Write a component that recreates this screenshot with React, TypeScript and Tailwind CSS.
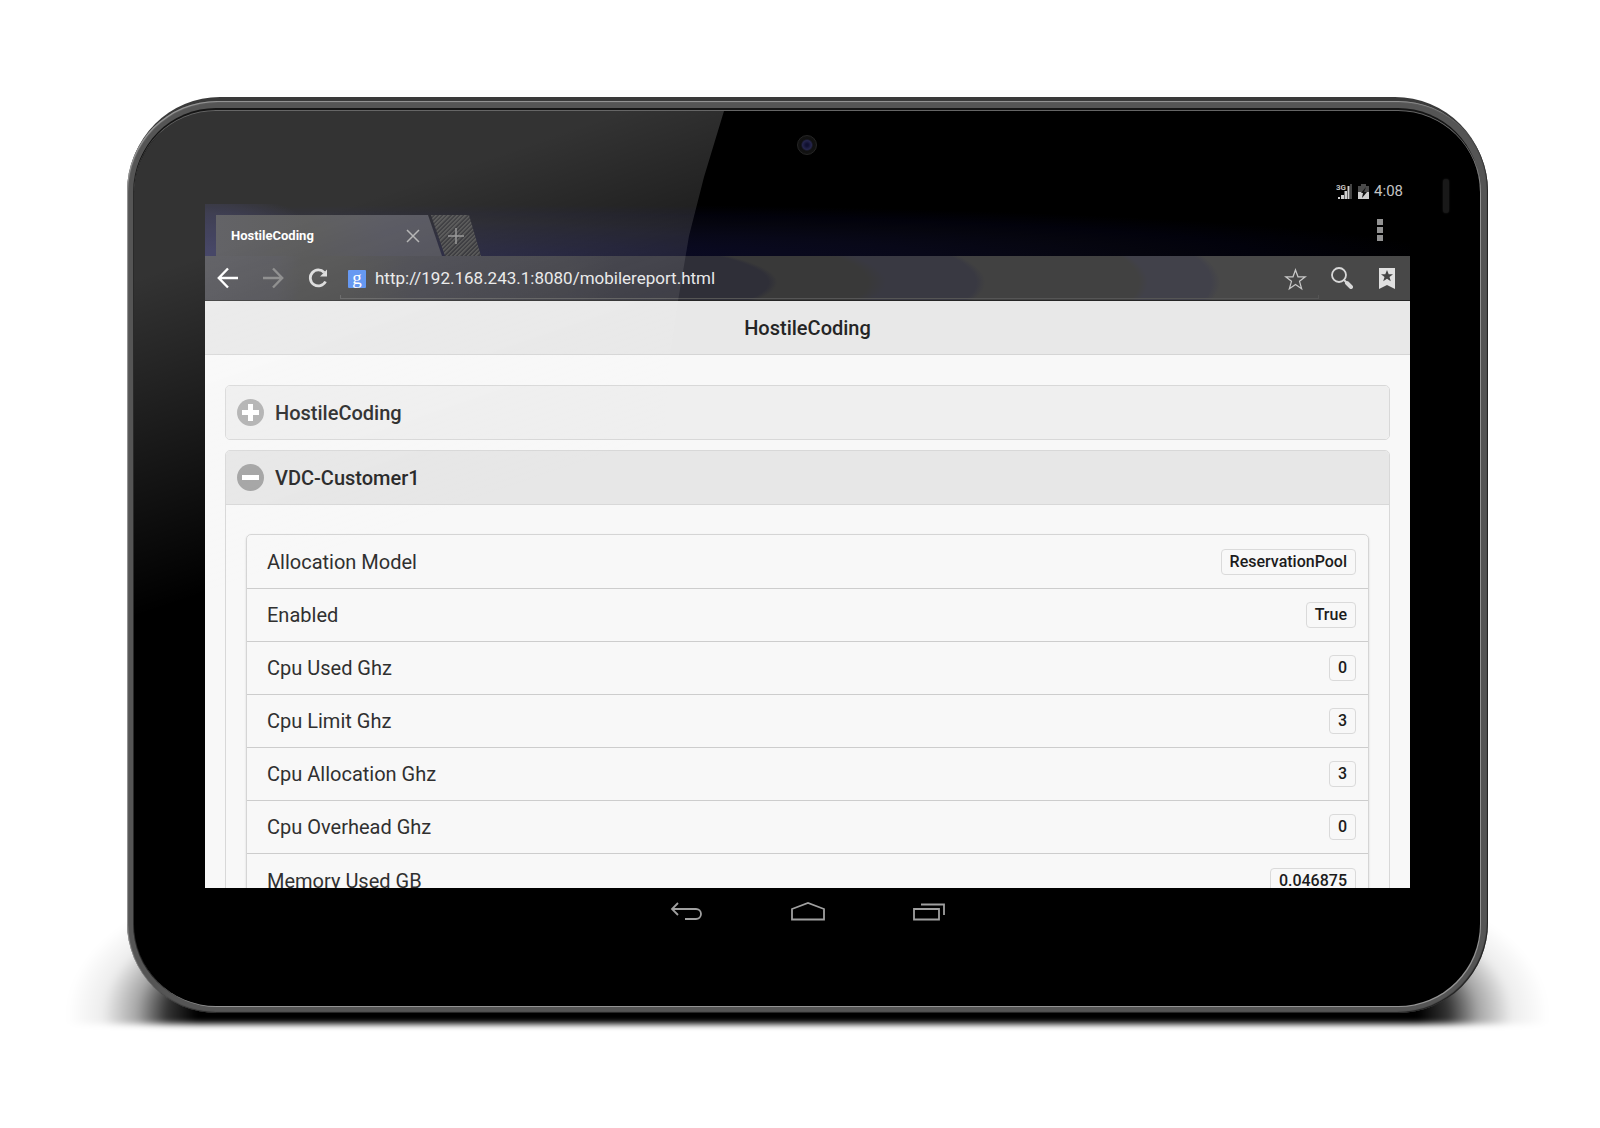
import React, { useState } from 'react';

const vdcDetails = [
    { label: 'Allocation Model', value: 'ReservationPool' },
    { label: 'Enabled', value: 'True' },
    { label: 'Cpu Used Ghz', value: '0' },
    { label: 'Cpu Limit Ghz', value: '3' },
    { label: 'Cpu Allocation Ghz', value: '3' },
    { label: 'Cpu Overhead Ghz', value: '0' },
    { label: 'Memory Used GB', value: '0.046875' },
];

const StatusBar: React.FC = () => (
    <div className="flex h-[26px] shrink-0 items-center justify-end gap-[5px] pr-[7px] text-[#c4c4c4]">
        <svg width="17" height="17" viewBox="0 0 17 17" aria-hidden="true">
            <text x="0" y="7" fill="#c4c4c4" fontSize="8" fontWeight="700" fontFamily="Roboto, sans-serif">3G</text>
            <path d="M2 16v-2h2v2zM5 16v-4h3v4zM8.500 16V8h2.500v8zM11.500 16V3h2v13z" fill="#d0d0d0" />
            <path d="M14 16V1h2v15z" fill="#444" />
        </svg>
        <svg width="11" height="17" viewBox="0 0 11 17" aria-hidden="true">
            <path d="M3 1h5v2h3v13H0V3h3z" fill="#4a4a4a" />
            <path d="M0 9h11v7H0z" fill="#cfcfcf" />
            <path d="M8 4 3 10h2l-1 5 5-6H6z" fill="#111" />
        </svg>
        <span className="text-[15px] leading-5">4:08</span>
    </div>
);

const TabStrip: React.FC = () => (
    <div className="flex h-[52px] shrink-0 items-end justify-between bg-black bg-[radial-gradient(ellipse_10%_130%_at_0%_100%,#1b1b46,#10102a_60%,transparent),radial-gradient(ellipse_78%_100%_at_25%_100%,#0b0b28,#080818_45%,#05050e_68%,#02020c_80%,#000)] pl-[11px]">
        <div className="flex items-end">
            <div className="flex h-[41px] w-[226px] items-center justify-between bg-[linear-gradient(90deg,#3c3c41,#393939_40%,#393943_75%)] pr-[22px] pl-[15px] [clip-path:polygon(0_0,calc(100%-14px)_0,100%_100%,0_100%)]">
                <span className="text-[13px] font-bold text-white">HostileCoding</span>
                <button type="button" aria-label="Close tab">
                    <svg width="14" height="14" viewBox="0 0 14 14" stroke="#a8a8a8" strokeWidth="1.500" aria-hidden="true">
                        <path d="m1 1 12 12M13 1 1 13" />
                    </svg>
                </button>
            </div>
            <button
                type="button"
                aria-label="New tab"
                className="-ml-[11px] flex h-[41px] w-[50px] items-center justify-center bg-[repeating-linear-gradient(135deg,#3c3c3c_0px,#3c3c3c_1px,#1c1c20_2px,#1c1c20_3px)] [clip-path:polygon(0_0,38px_0,100%_100%,14px_100%)]"
            >
                <svg width="16" height="16" viewBox="0 0 16 16" stroke="#868686" strokeWidth="1.500" aria-hidden="true">
                    <path d="M8 0v16M0 8h16" />
                </svg>
            </button>
        </div>
        <button type="button" aria-label="Browser menu" className="mr-[27px] mb-[15px] flex flex-col gap-[2px]">
            <span className="size-[6px] bg-[#929292]" />
            <span className="size-[6px] bg-[#929292]" />
            <span className="size-[6px] bg-[#929292]" />
        </button>
    </div>
);

const Toolbar: React.FC = () => (
    <form
        onSubmit={(e) => e.preventDefault()}
        className="flex h-[45px] shrink-0 items-center border-b border-[#252525] bg-[#484848] bg-[linear-gradient(90deg,#3e3e44,#3c3c41_6%,#393939_8%,#393939_12%,#34343c_18%,#33333a_30%,transparent_34%),radial-gradient(ellipse_75%_350%_at_25%_60%,#2f2f38_29%,#393939_30%,#393939_40%,#393942_42%,#393942_52%,#414141_53%,#414141_70%,#41414a_71%,#41414a_78%,#484848_79%)] pr-[15px] pl-3"
    >
        <button type="button" aria-label="Back">
            <svg width="22" height="22" viewBox="0 0 22 22" fill="none" stroke="#fff" strokeWidth="2.400" aria-hidden="true">
                <path d="M21 11H2M11 1.500 1.800 11l9.200 9.500" />
            </svg>
        </button>
        <button type="button" aria-label="Forward" className="ml-[23px]">
            <svg width="22" height="22" viewBox="0 0 22 22" fill="none" stroke="#7a7a7a" strokeWidth="2.400" aria-hidden="true">
                <path d="M1 11h19M11 1.500l9.200 9.500-9.200 9.500" />
            </svg>
        </button>
        <button type="button" aria-label="Reload" className="ml-6">
            <svg width="20" height="20" viewBox="0 0 20 20" fill="none" aria-hidden="true">
                <path d="M16.200 4.500A8 8 0 1 0 17.500 13.500" stroke="#d8d8d8" strokeWidth="2.800" />
                <path d="M19 1.500V8.500h-7z" fill="#d8d8d8" />
            </svg>
        </button>
        <div className="mt-[6px] ml-[12px] flex h-[36px] min-w-0 flex-1 items-center bg-[linear-gradient(#555,#555),linear-gradient(#555,#555),linear-gradient(#555,#555)] bg-[length:100%_1px,1px_4px,1px_4px] bg-[position:bottom,left_bottom,right_bottom] bg-no-repeat pr-3 pb-1 pl-2">
            <span className="flex size-[18px] shrink-0 items-center justify-center rounded-[1px] bg-[#4a86f0] pb-1 font-['Liberation_Serif',serif] text-[19px] leading-none text-white">
                g
            </span>
            <input
                type="text"
                aria-label="Address"
                defaultValue="http://192.168.243.1:8080/mobilereport.html"
                className="ml-[9px] min-w-0 flex-1 bg-transparent text-[17px] text-[#e8e8e8] outline-none"
            />
            <button type="button" aria-label="Add bookmark">
                <svg width="23" height="23" viewBox="0 0 24 24" fill="none" stroke="#c8c8c8" strokeWidth="1.300" aria-hidden="true">
                    <path d="m12 2 2.600 7.200h7.600l-6 4.700 2.200 7.800L12 17.200l-6.400 4.500 2.200-7.800-6-4.700h7.600z" />
                </svg>
            </button>
        </div>
        <button type="button" aria-label="Search" className="ml-[12px]">
            <svg width="22" height="22" viewBox="0 0 22 22" fill="none" stroke="#d8d8d8" strokeLinecap="round" aria-hidden="true">
                <circle cx="8" cy="8" r="7" strokeWidth="1.800" />
                <path d="m13 13 2.500 2.500" strokeWidth="2" />
                <path d="m16 16 4 4" strokeWidth="4" />
            </svg>
        </button>
        <button type="button" aria-label="Bookmarks" className="ml-[26px]">
            <svg width="16" height="21" viewBox="0 0 16 21" aria-hidden="true">
                <path d="M0 0h16v21l-8-4-8 4z" fill="#e0e0e0" />
                <path d="m8 2 1.700 4.200h4.300l-3.500 2.700 1.300 4.300L8 10.700l-3.800 2.500 1.300-4.300L2 6.200h4.300z" fill="#444" />
            </svg>
        </button>
    </form>
);

interface ToggleIconProps {
    open: boolean;
}

const ToggleIcon: React.FC<ToggleIconProps> = ({ open }) => (
    <svg width="27" height="27" viewBox="0 0 27 27" aria-hidden="true">
        <circle cx="13.500" cy="13.500" r="13.500" fill={open ? '#a2a2a2' : '#afafaf'} />
        <path d={open ? 'M5 11h17v5H5z' : 'M5 11h6V5h5v6h6v5h-6v6h-5v-6H5z'} fill="#fff" />
    </svg>
);

interface CollapsibleProps {
    title: string;
    defaultOpen?: boolean;
    children?: React.ReactNode;
}

const Collapsible: React.FC<CollapsibleProps> = ({ title, defaultOpen = false, children }) => {
    const [open, setOpen] = useState(defaultOpen);

    return (
        <section className="overflow-hidden rounded-[5px] border border-[#d8d8d8]">
            <h2>
                <button
                    type="button"
                    aria-expanded={open}
                    onClick={() => setOpen(!open)}
                    className={`flex w-full items-center gap-[11px] pl-[11px] text-left text-xl font-medium text-[#252525] ${
                        open ? 'h-[54px] border-b border-[#d8d8d8] bg-[#e7e7e7]' : 'h-[53px] bg-[#efefef]'
                    }`}
                >
                    <ToggleIcon open={open} />
                    {title}
                </button>
            </h2>
            {open && <div className="px-5 pt-[29px] pb-5">{children}</div>}
        </section>
    );
};

const DetailList: React.FC = () => (
    <ul className="rounded-[5px] border border-[#d5d5d5] pt-px shadow-[0_1px_2px_rgba(0,0,0,0.15)]">
        {vdcDetails.map((item) => (
            <li
                key={item.label}
                className="flex h-[53px] items-center justify-between border-b border-[#cdcdcd] pr-3 pl-5 text-xl text-[#303030] last:border-b-0"
            >
                {item.label}
                <span className="rounded-[4px] border border-[#dadada] px-2 text-base leading-6 font-medium text-[#1c1c1c]">
                    {item.value}
                </span>
            </li>
        ))}
    </ul>
);

const NavBar: React.FC = () => (
    <nav className="flex h-[48px] shrink-0 items-center justify-center gap-[87px]">
        <button type="button" aria-label="Back">
            <svg width="34" height="20" viewBox="0 0 34 20" fill="none" stroke="#a0a0a0" strokeWidth="1.800" aria-hidden="true">
                <path d="M8 1 2 7l6 6M2.500 7H26a5 5 0 0 1 0 10H15" />
            </svg>
        </button>
        <button type="button" aria-label="Home">
            <svg width="34" height="20" viewBox="0 0 34 20" fill="none" stroke="#a0a0a0" strokeWidth="1.800" aria-hidden="true">
                <path d="M1 17.500V7L17 1l16 6v10.500z" />
            </svg>
        </button>
        <button type="button" aria-label="Recent apps">
            <svg width="34" height="20" viewBox="0 0 34 20" fill="none" stroke="#a0a0a0" strokeWidth="1.800" aria-hidden="true">
                <path d="M2 7h25v10.500H2zM9 2.500h23v10.500" />
            </svg>
        </button>
    </nav>
);

// Camera, speaker slot and the light reflection lie over the glass
const GlassOverlay: React.FC = () => (
    <div className="pointer-events-none absolute inset-0 overflow-hidden rounded-[82px]">
        <div className="absolute top-0 left-0 h-[560px] w-[590px] bg-[linear-gradient(161deg,rgba(255,255,255,0.2)_160px,rgba(255,255,255,0)_480px)] [clip-path:polygon(0_0,100%_0,570px_66px,555px_125px,544px_190px,537px_240px,532px_300px,530px_100%,0_100%)]" />
        <div className="absolute top-[24px] left-1/2 size-5 -translate-x-1/2 rounded-full border border-[#252525] bg-[radial-gradient(circle,#101030_10%,#25254c_35%,#101010_48%,#161616)]" />
        <div className="absolute top-[68px] right-[31px] h-[34px] w-[6px] rounded-full bg-[#191919] shadow-[0_0_2px_#222]" />
    </div>
);

const DeviceShadow: React.FC = () => (
    <div className="absolute -right-[60px] -bottom-[11px] -left-[60px] h-[130px] blur-[3px]">
        <div className="flex h-full justify-between">
            <div className="h-full w-[200px] bg-[radial-gradient(ellipse_100%_98%_at_100%_92%,#000_35%,rgba(0,0,0,0.8)_50%,rgba(0,0,0,0.35)_65%,rgba(0,0,0,0.07)_82%,transparent)]" />
            <div className="h-full flex-1 bg-black" />
            <div className="h-full w-[200px] bg-[radial-gradient(ellipse_100%_98%_at_0%_92%,#000_35%,rgba(0,0,0,0.8)_50%,rgba(0,0,0,0.35)_65%,rgba(0,0,0,0.07)_82%,transparent)]" />
        </div>
    </div>
);

const App: React.FC = () => {
    return (
        <div className="flex h-screen flex-col overflow-hidden bg-white pt-[97px] pr-28 pb-[115px] pl-[127px] font-[Roboto,sans-serif]">
            <div className="relative flex min-h-0 flex-1 flex-col pt-1">
                <DeviceShadow />
                <div className="absolute inset-x-[1px] top-0 h-[200px] rounded-t-[92px] bg-[#3a3a3a]" />
                <div className="relative flex min-h-0 flex-1 flex-col rounded-[90px] bg-[#555] pt-[9px] pr-2 pb-[7px] pl-[7px] shadow-[inset_1px_1px_1px_#9a9a9a,inset_-1px_-1px_1px_#222]">
                    <div className="relative flex min-h-0 flex-1 flex-col rounded-[82px] border-t border-[#666] bg-black pt-[67px] pr-[70px] pb-[70px] pl-[71px] shadow-[1px_1px_0_#949494,0_-2px_0_#151515,-1px_0_0_#2a2a2a]">
                        <StatusBar />
                        <TabStrip />
                        <Toolbar />
                        <main className="min-h-0 flex-1 overflow-y-auto bg-[#f8f8f8] [scrollbar-width:none]">
                            <header className="flex h-[54px] items-center justify-center border-b border-[#d5d5d5] bg-[#e8e8e8] pt-px">
                                <h1 className="text-xl font-medium text-[#252525]">HostileCoding</h1>
                            </header>
                            <div className="flex flex-col gap-[10px] px-5 pt-[30px]">
                                <Collapsible title="HostileCoding" />
                                <Collapsible title="VDC-Customer1" defaultOpen>
                                    <DetailList />
                                </Collapsible>
                            </div>
                        </main>
                        <NavBar />
                        <GlassOverlay />
                    </div>
                </div>
            </div>
        </div>
    );
};

export default App;
